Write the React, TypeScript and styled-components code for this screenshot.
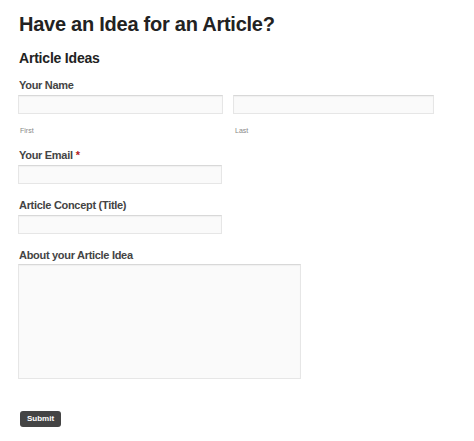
import React from 'react';
import styled, { createGlobalStyle } from 'styled-components';

const GlobalStyle = createGlobalStyle`
  html, body {
    margin: 0;
    padding: 0;
    background: #ffffff;
  }
  body {
    font-family: 'Liberation Sans', Arial, Helvetica, sans-serif;
    color: #222;
  }
`;

const Page = styled.div`
  padding: 11px 0 0 19px;
  width: 474px;
  box-sizing: border-box;
`;

const Title = styled.h1`
  margin: 0;
  font: 700 20px/26px 'Liberation Sans', Arial, sans-serif;
  letter-spacing: -0.25px;
  color: #222;
`;

const FormTitle = styled.h2`
  margin: 12px 0 0;
  font: 700 14px/18px 'Liberation Sans', Arial, sans-serif;
  letter-spacing: -0.2px;
  color: #222;
`;

const Form = styled.form`
  display: flex;
  flex-direction: column;
  margin-top: 11px;
`;

const Field = styled.div<{ gap?: number }>`
  display: flex;
  flex-direction: column;
  margin-top: ${(p) => p.gap ?? 0}px;
`;

const Label = styled.label<{ tight?: boolean }>`
  font: 700 11px/14px 'Liberation Sans', Arial, sans-serif;
  letter-spacing: -0.3px;
  color: #444;
  margin-bottom: ${(p) => (p.tight ? 1 : 3)}px;
`;

const Required = styled.span`
  color: #b22222;
  margin-left: 3px;
`;

const NameRow = styled.div`
  display: flex;
  gap: 10px;
`;

const NamePart = styled.div<{ w: number }>`
  display: flex;
  flex-direction: column;
  width: ${(p) => p.w}px;
`;

const SubLabel = styled.span`
  font: 400 7px/9px 'Liberation Sans', Arial, sans-serif;
  color: #888;
  margin-top: 12px;
  padding-left: 1px;
`;

const TextInput = styled.input<{ w?: number }>`
  box-sizing: border-box;
  width: ${(p) => (p.w ? `${p.w}px` : '100%')};
  height: 19px;
  margin: 0 0 0 -1px;
  padding: 2px 4px;
  background: #fafafa;
  border: 1px solid #e6e6e6;
  border-top-color: #d8d8d8;
  border-radius: 0;
  box-shadow: inset 0 1px 1px rgba(0, 0, 0, 0.04);
  font: 400 11px 'Liberation Sans', Arial, sans-serif;
  outline: none;
`;

const TextArea = styled.textarea`
  box-sizing: border-box;
  width: 283px;
  height: 115px;
  margin: 1px 0 0 -1px;
  padding: 4px;
  background: #fafafa;
  border: 1px solid #e6e6e6;
  border-top-color: #d8d8d8;
  box-shadow: inset 0 1px 1px rgba(0, 0, 0, 0.04);
  resize: none;
  font: 400 11px 'Liberation Sans', Arial, sans-serif;
  outline: none;
`;

const SubmitButton = styled.button`
  align-self: flex-start;
  margin: 32px 0 0 1px;
  height: 16px;
  padding: 0 7px;
  background: #444;
  color: #fff;
  border: none;
  border-radius: 3px;
  font: 700 8px/16px 'Liberation Sans', Arial, sans-serif;
  cursor: pointer;
`;

export default function App() {
  return (
    <>
      <GlobalStyle />
      <Page>
        <Title>Have an Idea for an Article?</Title>
        <FormTitle>Article Ideas</FormTitle>
        <Form onSubmit={(e) => e.preventDefault()}>
          <Field>
            <Label>Your Name</Label>
            <NameRow>
              <NamePart w={205}>
                <TextInput />
                <SubLabel>First</SubLabel>
              </NamePart>
              <NamePart w={201}>
                <TextInput />
                <SubLabel>Last</SubLabel>
              </NamePart>
            </NameRow>
          </Field>
          <Field gap={13}>
            <Label>
              Your Email<Required>*</Required>
            </Label>
            <TextInput w={204} />
          </Field>
          <Field gap={14}>
            <Label>Article Concept (Title)</Label>
            <TextInput w={204} />
          </Field>
          <Field gap={14}>
            <Label tight>About your Article Idea</Label>
            <TextArea />
          </Field>
          <SubmitButton type="submit">Submit</SubmitButton>
        </Form>
      </Page>
    </>
  );
}
